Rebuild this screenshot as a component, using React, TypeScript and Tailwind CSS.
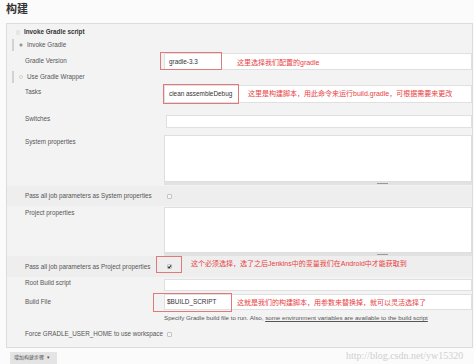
import React from 'react';

const labelCls = 'w-[139px] shrink-0 whitespace-nowrap text-[6.3px] leading-[8px] text-[#555]';
const noteCls = 'absolute whitespace-nowrap text-[7px] leading-[9px] text-[#e8413f]';

function Checkbox({ checked = false }: { checked?: boolean }) {
  return (
    <span className="relative ml-[2.5px] block h-[5px] w-[5px] rounded-[1px] border border-[#c4c4c4] bg-[#f6f6f6]">
      {checked && (
        <svg viewBox="0 0 10 10" className="absolute left-[-1px] top-[-1px] h-[5px] w-[5px]">
          <path d="M2 5.2 L4.2 7.6 L8.2 2.6" fill="none" stroke="#333" strokeWidth="2.2" />
        </svg>
      )}
    </span>
  );
}

function TextArea({ h }: { h: string }) {
  return (
    <div className="flex flex-col">
      <div className={`${h} border border-[#dedede] bg-white`} />
      <div className="flex h-[3px] items-center bg-[#e2e2e2] pl-[213px]">
        <span className="h-[1.5px] w-[11px] bg-[#9a9a9a]" />
      </div>
    </div>
  );
}

export default function App() {
  return (
    <div className="relative h-[364px] w-[474px] overflow-hidden bg-[#fbfbfb] font-['Liberation_Sans','Noto_Sans_CJK_SC',sans-serif]">
      <div className="h-[23px] pl-[6px] pt-[2px] text-[11px] font-bold leading-[14px] text-[#333]">构建</div>

      <div className="ml-[6px] h-[325px] w-[467px] border border-[#dcdcdc] bg-[#f3f3f3] pt-[2px]">
        {/* Invoke Gradle script */}
        <div className="flex h-[12px] items-center pl-[9px]">
          <span className="h-[5px] w-[4px] rounded-[1px] bg-[#e6e6e6]" />
          <span className="ml-[4px] text-[6.3px] font-bold leading-[8px] text-[#333]">Invoke Gradle script</span>
        </div>

        {/* Invoke Gradle radio */}
        <div className="flex h-[13px] items-center pl-[5px]">
          <span className="h-[12px] w-[2px] bg-[#d2d2d2]" />
          <span className="ml-[5px] flex h-[4px] w-[4px] items-center justify-center rounded-full border border-[#c8c8c8] bg-white">
            <span className="h-[2px] w-[2px] rounded-full bg-[#777]" />
          </span>
          <span className="ml-[4px] text-[6.3px] leading-[8px] text-[#555]">Invoke Gradle</span>
        </div>

        {/* Gradle Version */}
        <div className="flex h-[20px] pl-[18px]">
          <div className={`${labelCls} pt-[6px]`}>Gradle Version</div>
          <div className="relative flex-1 pt-[2px]">
            <div className="flex h-[17px] items-center border border-[#e0e0e0] bg-white pl-[4px] text-[6.4px] text-[#333]">gradle-3.3</div>
            <div className="absolute left-[-4px] top-[1px] h-[18px] w-[62px] border border-[#e07a7a]" />
            <div className={`${noteCls} left-[73px] top-[7px]`}>这里选择我们配置的gradle</div>
          </div>
        </div>

        {/* Use Gradle Wrapper */}
        <div className="flex h-[12px] items-center pl-[5px]">
          <span className="h-[12px] w-[2px] bg-[#d2d2d2]" />
          <span className="ml-[5px] h-[4px] w-[4px] rounded-full border border-[#d0d0d0] bg-[#f8f8f8]" />
          <span className="ml-[4px] text-[6.3px] leading-[8px] text-[#555]">Use Gradle Wrapper</span>
        </div>

        {/* Tasks */}
        <div className="flex h-[24px] pl-[18px]">
          <div className={`${labelCls} pt-[5px]`}>Tasks</div>
          <div className="relative flex-1 pt-[2px]">
            <div className="flex h-[18px] items-center border border-[#e0e0e0] bg-white pl-[4px] text-[6.4px] text-[#333]">clean assembleDebug</div>
            <div className="absolute left-[-1px] top-[1px] h-[20px] w-[76px] border border-[#e07a7a]" />
            <div className={`${noteCls} left-[84px] top-[6px]`}>这里是构建脚本，用此命令来运行build.gradle，可根据需要来更改</div>
          </div>
        </div>

        {/* Switches */}
        <div className="flex h-[24px] pl-[18px]">
          <div className={`${labelCls} pt-[8px]`}>Switches</div>
          <div className="flex-1 pt-[8px]">
            <div className="ml-[2px] h-[13px] border border-[#e0e0e0] bg-white" />
          </div>
        </div>

        {/* System properties */}
        <div className="flex h-[55px] pl-[18px]">
          <div className={`${labelCls} pt-[7px]`}>System properties</div>
          <div className="flex-1 pt-[4px]">
            <TextArea h="h-[47px]" />
          </div>
        </div>

        {/* Pass System */}
        <div className="flex h-[20px] items-center bg-[#eeeeee] pl-[18px]">
          <div className={labelCls}>Pass all job parameters as System properties</div>
          <Checkbox />
        </div>

        {/* Project properties */}
        <div className="flex h-[50px] pl-[18px]">
          <div className={`${labelCls} pt-[3px]`}>Project properties</div>
          <div className="flex-1 pt-[1px]">
            <TextArea h="h-[46px]" />
          </div>
        </div>

        {/* Pass Project */}
        <div className="flex h-[21px] items-center bg-[#eeeeee] pl-[18px]">
          <div className={labelCls}>Pass all job parameters as Project properties</div>
          <div className="relative flex flex-1 items-center">
            <Checkbox checked />
            <div className="absolute left-[-8px] top-[-8px] h-[17px] w-[26px] border border-[#e07a7a]" />
            <div className={`${noteCls} left-[27px] top-[-5px]`}>这个必须选择，选了之后Jenkins中的变量我们在Android中才能获取到</div>
          </div>
        </div>

        {/* Root Build script */}
        <div className="flex h-[15px] pl-[18px]">
          <div className={`${labelCls} pt-[2px]`}>Root Build script</div>
          <div className="flex-1 pt-[2px]">
            <div className="h-[12px] border border-[#e0e0e0] bg-white" />
          </div>
        </div>

        {/* Build File */}
        <div className="flex h-[20px] pl-[18px]">
          <div className={`${labelCls} pt-[6px]`}>Build File</div>
          <div className="relative flex-1 pt-[2px]">
            <div className="flex h-[16px] items-center border border-[#e0e0e0] bg-white pl-[2px] text-[6.4px] text-[#333]">$BUILD_SCRIPT</div>
            <div className="absolute left-[-11px] top-[1px] h-[19px] w-[79px] border border-[#e07a7a]" />
            <div className={`${noteCls} left-[73px] top-[6px]`}>这就是我们的构建脚本，用参数来替换掉，就可以灵活选择了</div>
          </div>
        </div>

        {/* Help */}
        <div className="flex h-[12px] items-center pl-[18px]">
          <div className="w-[139px] shrink-0" />
          <div className="whitespace-nowrap text-[6.2px] leading-[8px] text-[#555]">
            Specify Gradle build file to run. Also,{' '}
            <span className="underline">some environment variables are available to the build script</span>
          </div>
        </div>

        {/* Force */}
        <div className="flex h-[20px] items-center pl-[18px]">
          <div className={labelCls}>Force GRADLE_USER_HOME to use workspace</div>
          <Checkbox />
        </div>
      </div>

      <div className="ml-[10px] mt-[4px] flex h-[12px] w-[47px] items-center gap-[3px] bg-[#e4e4e4] pl-[4px] text-[5px] text-[#555]">
        <span>增加构建步骤</span>
        <span className="text-[5px]">▾</span>
      </div>

      <div className="absolute left-[346px] top-[350px] font-['Liberation_Serif',serif] text-[10px] leading-[12px] text-[#cfcfcf]">
        http://blog.csdn.net/yw15320
      </div>
    </div>
  );
}
